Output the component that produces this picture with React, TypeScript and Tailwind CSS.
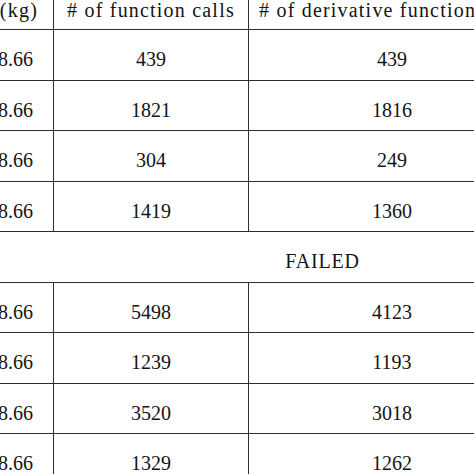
import React from "react";

const rows: (string[] | null)[] = [
  ["8.66", "439", "439"],
  ["8.66", "1821", "1816"],
  ["8.66", "304", "249"],
  ["8.66", "1419", "1360"],
  null,
  ["8.66", "5498", "4123"],
  ["8.66", "1239", "1193"],
  ["8.66", "3520", "3018"],
  ["8.66", "1329", "1262"],
];

export default function App() {
  return (
    <div className="w-[474px] h-[474px] overflow-hidden bg-white text-[#141414] [font-family:'Liberation_Serif','Times_New_Roman',serif]">
      <div className="-ml-[23px] w-[614px] flex flex-col">
        <div className="grid grid-cols-[77px_195px_286px_56px] h-[30px] border-b border-[#2e2e2e] text-[20px] leading-[20px] tracking-[1.2px]">
          <div className="border-r border-[#2e2e2e] pr-[15px] flex justify-end">
            <span className="whitespace-nowrap">Mass (kg)</span>
          </div>
          <div className="border-r border-[#2e2e2e] text-center whitespace-nowrap">
            # of function calls
          </div>
          <div className="text-center whitespace-nowrap">
            # of derivative function calls
          </div>
          <div className="whitespace-nowrap pl-[10px]">Status</div>
        </div>
        {rows.map((r, i) =>
          r ? (
            <div
              key={i}
              className="grid grid-cols-[77px_195px_286px_56px] h-[50.5px] border-b border-[#2e2e2e] text-[20px] leading-[20px]"
            >
              <div className="border-r border-[#2e2e2e] text-right pr-[20px] pt-[19px]">{r[0]}</div>
              <div className="border-r border-[#2e2e2e] text-center pt-[19px]">{r[1]}</div>
              <div className="text-center pt-[19px]">{r[2]}</div>
              <div />
            </div>
          ) : (
            <div
              key={i}
              className="grid grid-cols-[77px_195px_286px_56px] h-[50.5px] border-b border-[#2e2e2e] text-[20px] leading-[20px]"
            >
              <div />
              <div className="col-span-3 text-center pt-[19px] tracking-[0.8px]">FAILED</div>
            </div>
          )
        )}
      </div>
    </div>
  );
}
